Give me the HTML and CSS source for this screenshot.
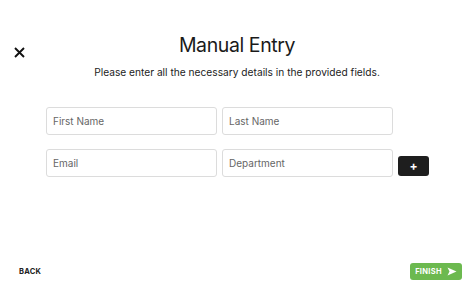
FILE: index.html
```html
<!DOCTYPE html>
<html>
<head>
<meta charset="utf-8">
<link rel="stylesheet" href="styles.css">
</head>
<body>
<div class="page">
  <header class="head">
    <button class="close" aria-label="Close">
      <svg width="11" height="11" viewBox="0 0 11 11"><path d="M1 1L10 10M10 1L1 10" stroke="#111" stroke-width="1.9" fill="none"/></svg>
    </button>
    <div class="titles">
      <h1 class="title">Manual Entry</h1>
      <p class="sub">Please enter all the necessary details in the provided fields.</p>
    </div>
  </header>
  <main class="form">
    <div class="field">First Name</div>
    <div class="field">Last Name</div>
    <div class="spacer"></div>
    <div class="field">Email</div>
    <div class="field">Department</div>
    <button class="add">+</button>
  </main>
  <footer class="foot">
    <button class="back">BACK</button>
    <button class="finish">FINISH
      <svg width="10" height="9" viewBox="0 0 10 9"><path d="M0.5 0.5L9.5 4.5L0.5 8.5L2.5 4.5Z" fill="#fff"/></svg>
    </button>
  </footer>
</div>
</body>
</html>
```
FILE: styles.css
```css
* { box-sizing: border-box; }
html, body { margin: 0; padding: 0; background: #fff; }
body { font-family: "Inter", "Lato", sans-serif; color: #1a1a1a; }
.page { width: 474px; height: 294px; display: flex; flex-direction: column; }
.head { display: grid; grid-template-columns: 46px 1fr 46px; padding-top: 32px; }
.close { grid-column: 1; background: none; border: 0; padding: 0; margin: 15px 0 0 14px; width: 11px; height: 11px; display: flex; align-self: start; }
.titles { grid-column: 2; text-align: center; }
.title { margin: 0; font-size: 19.5px; font-weight: 400; line-height: 26px; letter-spacing: -0.4px; color: #1a1a1a; }
.sub { margin: 7px 0 0; font-size: 10.2px; line-height: 14px; color: #222; }
.form { display: grid; grid-template-columns: 171px 171px 31px; column-gap: 5px; row-gap: 14px; margin: 28px 0 0 46px; }
.field { height: 28px; border: 1px solid #dcdcdc; border-radius: 3px; padding: 0 6px; display: flex; align-items: center; font-size: 10px; color: #666; }
.add { align-self: end; margin-bottom: 1px; height: 20px; background: #1e1e1e; color: #fff; border: 0; border-radius: 3px; font-size: 12px; font-weight: 700; padding: 0; line-height: 20px; font-family: inherit; }
.foot { margin-top: auto; display: flex; justify-content: space-between; align-items: center; padding: 0 12px 14px 19px; }
.back { background: none; border: 0; padding: 0; font-family: inherit; font-size: 7.5px; font-weight: 700; color: #222; letter-spacing: 0.2px; }
.finish { background: #6cb94f; border: 0; border-radius: 3px; color: #fff; height: 17px; width: 52px; display: flex; align-items: center; justify-content: center; gap: 5px; font-family: inherit; font-size: 7.5px; font-weight: 700; letter-spacing: 0.3px; padding: 0; }
```
